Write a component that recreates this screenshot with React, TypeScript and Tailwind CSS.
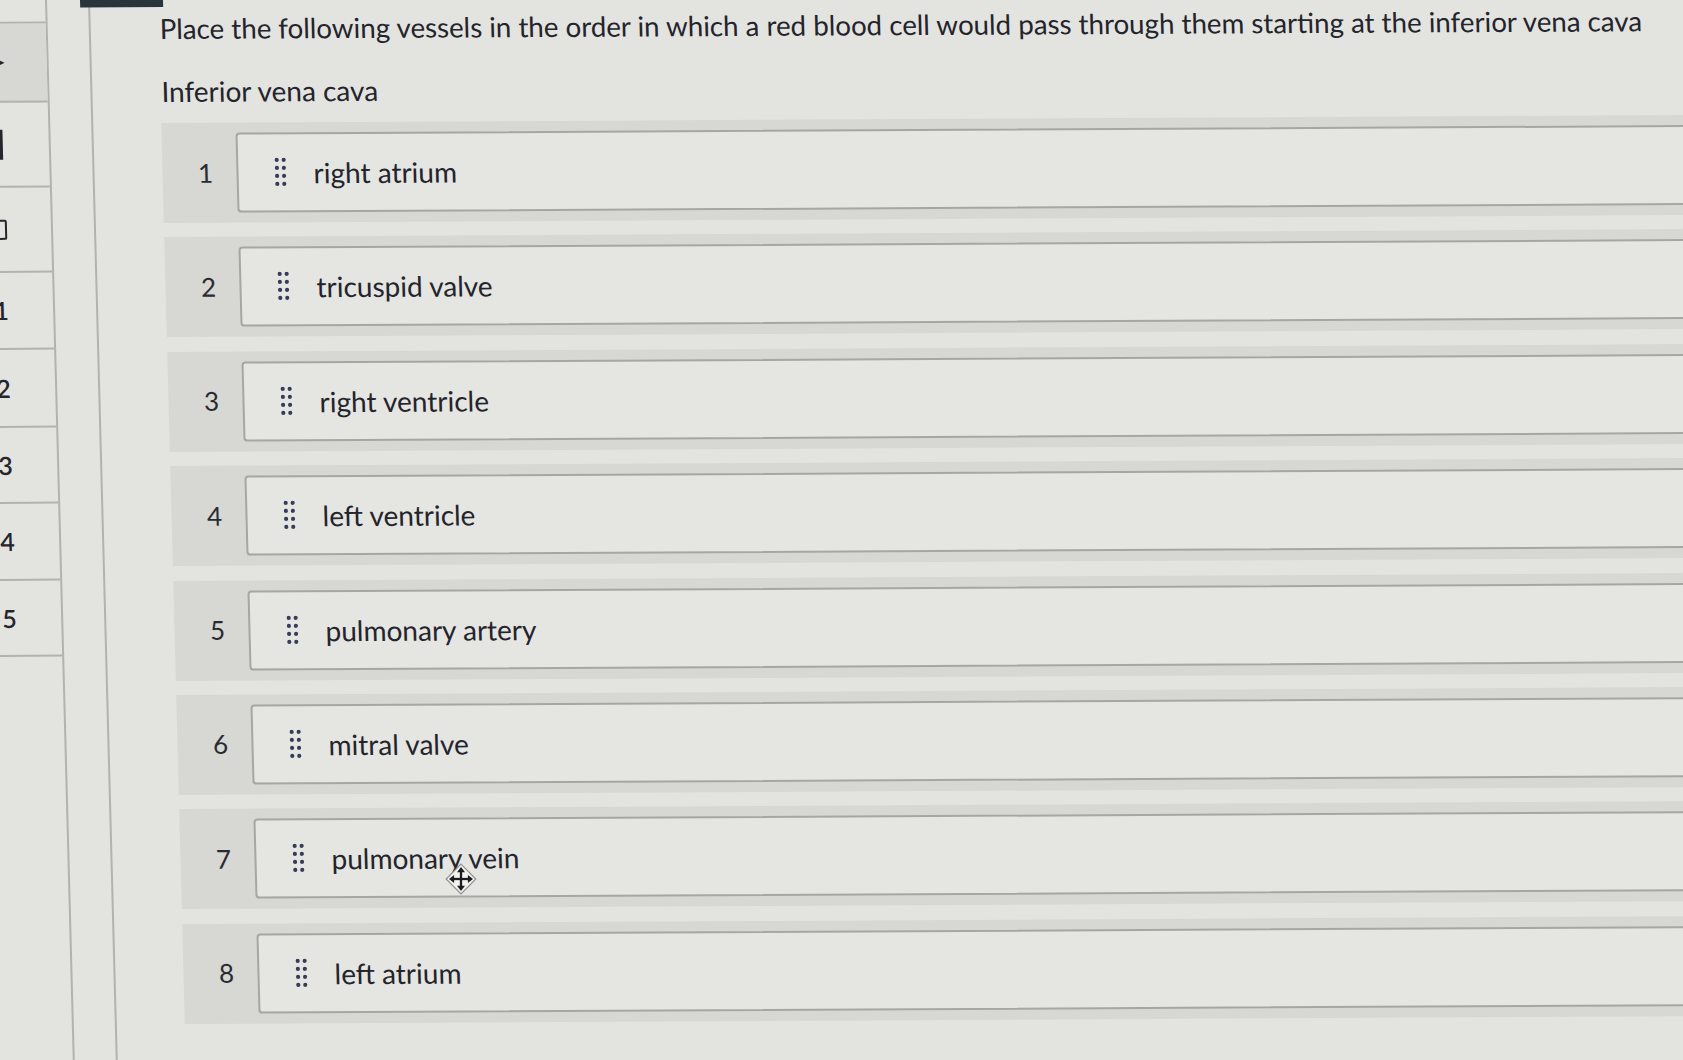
import React from "react";

const items = [
  "right atrium",
  "tricuspid valve",
  "right ventricle",
  "left ventricle",
  "pulmonary artery",
  "mitral valve",
  "pulmonary vein",
  "left atrium",
];

// sidebar cells (heights include the bottom rule)
const sideCells = [
  { h: "h-[24px]", mark: "" },
  { h: "h-[79px]", mark: "tri", active: true },
  { h: "h-[85px]", mark: "bar" },
  { h: "h-[85px]", mark: "box" },
  { h: "h-[77px]", mark: "1" },
  { h: "h-[78px]", mark: "2" },
  { h: "h-[76px]", mark: "3" },
  { h: "h-[77px]", mark: "4" },
  { h: "h-[76px]", mark: "5" },
];

function Grip() {
  return (
    <svg width="12" height="30" viewBox="0 0 12 30" className="shrink-0">
      {[2.5, 10.5, 18.5, 26.5].map((y) => (
        <g key={y} fill="#383c5a">
          <circle cx="2.5" cy={y} r="2.1" />
          <circle cx="9.5" cy={y} r="2.1" />
        </g>
      ))}
    </svg>
  );
}

function SideMark({ mark }: { mark: string }) {
  if (mark === "tri")
    return (
      <svg width="33" height="10" viewBox="0 0 33 10" className="shrink-0">
        <polygon points="22,0 33,5 22,10" fill="#25262c" />
      </svg>
    );
  if (mark === "bar") return <div className="ml-[19px] h-[30px] w-[10px] bg-[#25262c]" />;
  if (mark === "box") return <div className="ml-[11px] h-[20px] w-[20px] rounded-[2px] border-2 border-[#25262c]" />;
  if (!mark) return null;
  return <span className="pl-[16px] text-[25px] font-semibold leading-none text-[#25262c]">{mark}</span>;
}

function Row({ n, label }: { n: number; label: string }) {
  return (
    <div className="flex h-[100px] items-center bg-[#d7d7d4]">
      <div className="w-[74px] shrink-0 pl-[12px] text-center text-[26px] leading-[31px] text-[#2a2b32]">{n}</div>
      <div className="flex h-[80px] flex-1 items-center rounded-[4px] border-2 border-[#a6a6a3] bg-[#e5e5e2] pl-[36px]">
        <Grip />
        <span className="ml-[27px] text-[28px] leading-[34px] text-[#23242c]">{label}</span>
      </div>
    </div>
  );
}

function MoveCursor() {
  return (
    <svg width="32" height="32" viewBox="0 0 28 28" className="absolute left-[445px] top-[863px]">
      <polygon points="14,1 27,14 14,27 1,14" fill="#f2f2f0" stroke="#8e8e8c" strokeWidth="1" />
      <g fill="#1c1c1e">
        <rect x="13" y="6" width="2" height="16" />
        <rect x="6" y="13" width="16" height="2" />
        <polygon points="14,3.5 17.5,8 10.5,8" />
        <polygon points="14,24.5 17.5,20 10.5,20" />
        <polygon points="3.5,14 8,10.5 8,17.5" />
        <polygon points="24.5,14 20,10.5 20,17.5" />
      </g>
    </svg>
  );
}

export default function App() {
  return (
    <div className="relative h-[1060px] w-[1683px] overflow-hidden bg-[#e3e3e0] font-['Lato',sans-serif]">
      <div className="relative -ml-[30px] flex h-[1080px] w-[1780px] origin-top-left skew-x-[1.5deg] skew-y-[-0.3deg] bg-[#e3e3e0]">
        <div className="absolute left-[110px] top-0 h-[8px] w-[83px] bg-[#28363b]" />

        <aside className="flex w-[77px] shrink-0 flex-col border-r-2 border-[#b2b2af]">
          {sideCells.map((c, i) => (
            <div
              key={i}
              className={`flex items-center border-b-2 border-[#b2b2af] ${c.h} ${c.active ? "bg-[#d7d7d4]" : ""}`}
            >
              <SideMark mark={c.mark} />
            </div>
          ))}
        </aside>

        <div className="w-[43px] shrink-0 border-r-2 border-[#b2b2af]" />

        <main className="flex flex-1 flex-col pl-[68px] pt-[13px]">
          <h1 className="whitespace-nowrap pl-px text-[27.7px] font-normal leading-[34px] text-[#23242c]">
            Place the following vessels in the order in which a red blood cell would pass through them starting at the inferior vena cava
          </h1>
          <p className="mt-[28px] pl-px text-[28px] leading-[34px] text-[#23242c]">Inferior vena cava</p>
          <div className="mt-[15px] flex flex-col gap-[14.4px]">
            {items.map((label, i) => (
              <Row key={label} n={i + 1} label={label} />
            ))}
          </div>
        </main>
      </div>
      <MoveCursor />
    </div>
  );
}
